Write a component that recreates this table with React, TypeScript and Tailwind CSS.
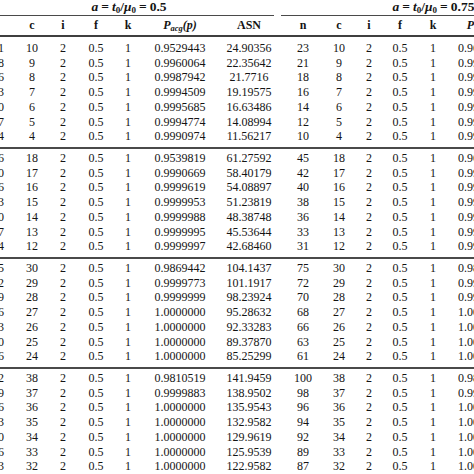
import React from "react";

type Row = [string, string, string, string, string, string, string];

const blocks: Row[][] = [
  [
    ["31", "10", "0.9529443", "24.90356", "23", "0.9636542", "17.47013"],
    ["28", "9", "0.9960064", "22.35642", "21", "0.9958412", "15.71244"],
    ["26", "8", "0.9987942", "21.7716", "18", "0.9987310", "13.95218"],
    ["23", "7", "0.9994509", "19.19575", "16", "0.9994215", "12.20365"],
    ["20", "6", "0.9995685", "16.63486", "14", "0.9995503", "10.44137"],
    ["17", "5", "0.9994774", "14.08994", "12", "0.9994620", "8.67290"],
    ["14", "4", "0.9990974", "11.56217", "10", "0.9990858", "6.91452"],
  ],
  [
    ["56", "18", "0.9539819", "61.27592", "45", "0.9602317", "43.10356"],
    ["50", "17", "0.9990669", "58.40179", "42", "0.9981604", "41.08213"],
    ["46", "16", "0.9999619", "54.08897", "40", "0.9999017", "38.06539"],
    ["43", "15", "0.9999953", "51.23819", "38", "0.9999902", "36.04411"],
    ["40", "14", "0.9999988", "48.38748", "36", "0.9999974", "34.02195"],
    ["37", "13", "0.9999995", "45.53644", "33", "0.9999990", "31.00820"],
    ["34", "12", "0.9999997", "42.68460", "31", "0.9999995", "28.99043"],
  ],
  [
    ["95", "30", "0.9869442", "104.1437", "75", "0.9874310", "73.50914"],
    ["92", "29", "0.9999773", "101.1917", "72", "0.9999581", "71.49672"],
    ["89", "28", "0.9999999", "98.23924", "70", "0.9999997", "69.48236"],
    ["86", "27", "1.0000000", "95.28632", "68", "1.0000000", "67.46711"],
    ["83", "26", "1.0000000", "92.33283", "66", "1.0000000", "65.45108"],
    ["80", "25", "1.0000000", "89.37870", "63", "1.0000000", "62.43502"],
    ["76", "24", "1.0000000", "85.25299", "61", "1.0000000", "60.41793"],
  ],
  [
    ["122", "38", "0.9810519", "141.9459", "100", "0.9836215", "99.59120"],
    ["119", "37", "0.9999883", "138.9502", "98", "0.9999710", "97.57864"],
    ["116", "36", "1.0000000", "135.9543", "96", "1.0000000", "95.56530"],
    ["113", "35", "1.0000000", "132.9582", "94", "1.0000000", "93.55147"],
    ["110", "34", "1.0000000", "129.9619", "92", "1.0000000", "91.53718"],
    ["106", "33", "1.0000000", "125.9539", "89", "1.0000000", "88.52204"],
    ["103", "32", "1.0000000", "122.9582", "87", "1.0000000", "86.50632"],
  ],
];

const cell = "shrink-0 text-center whitespace-nowrap";

function Title({ value }: { value: string }) {
  return (
    <span className="font-bold whitespace-nowrap text-[13.5px]">
      <i>a</i>
      <span className="mx-[3px]">=</span>
      <i>t</i>
      <sub className="text-[9px] not-italic">0</sub>/<i>μ</i>
      <sub className="text-[9px] not-italic">0</sub>
      <span className="mx-[3px]">=</span>
      {value}
    </span>
  );
}

function PHead() {
  return (
    <span className="font-bold italic whitespace-nowrap">
      P<sub className="text-[8.5px]">acg</sub>(p)
    </span>
  );
}

function Rule({ thick }: { thick?: boolean }) {
  return <div className={thick ? "h-[2px] bg-[#3f3f3f]" : "h-[1.3px] bg-[#4a4a4a]"} />;
}

function DataRow({ r }: { r: Row }) {
  return (
    <div className="flex h-[14.75px] leading-[14.75px]">
      <div className="shrink-0 w-[34px] pr-[10px] text-right whitespace-nowrap">{r[0]}</div>
      <div className={`${cell} w-[36px]`}>{r[1]}</div>
      <div className={`${cell} w-[26px]`}>2</div>
      <div className={`${cell} w-[40px]`}>0.5</div>
      <div className={`${cell} w-[24px]`}>1</div>
      <div className={`${cell} w-[80px]`}>{r[2]}</div>
      <div className={`${cell} w-[58px]`}>{r[3]}</div>
      <div className={`${cell} w-[50px]`}>{r[4]}</div>
      <div className={`${cell} w-[22px]`}>{r[1]}</div>
      <div className={`${cell} w-[38px]`}>2</div>
      <div className={`${cell} w-[24px]`}>0.5</div>
      <div className={`${cell} w-[42px]`}>1</div>
      <div className={`${cell} w-[59px]`}>{r[5]}</div>
      <div className={`${cell} w-[76px]`}>{r[6]}</div>
    </div>
  );
}

export default function App() {
  return (
    <div className="w-[474px] h-[474px] overflow-hidden bg-white">
      <div className="-ml-[20px] -mt-[2px] w-[609px] font-['Liberation_Serif',serif] text-[12px] text-[#141414]">
        <div className="flex h-[17px] leading-[17px]">
          <div className="w-[298px] shrink-0 text-center">
            <Title value="0.5" />
          </div>
          <div className="w-[311px] shrink-0 text-center">
            <Title value="0.75" />
          </div>
        </div>
        <div className="flex">
          <div className="w-[294px] shrink-0">
            <Rule />
          </div>
          <div className="w-[308px] shrink-0 ml-[7px]">
            <Rule />
          </div>
        </div>
        <div className="flex h-[19px] leading-[19px] font-bold">
          <div className="shrink-0 w-[34px] pr-[24px] text-right">n</div>
          <div className={`${cell} w-[36px]`}>c</div>
          <div className={`${cell} w-[26px]`}>i</div>
          <div className={`${cell} w-[40px]`}>f</div>
          <div className={`${cell} w-[24px]`}>k</div>
          <div className={`${cell} w-[80px]`}>
            <PHead />
          </div>
          <div className={`${cell} w-[58px]`}>ASN</div>
          <div className={`${cell} w-[50px]`}>n</div>
          <div className={`${cell} w-[22px]`}>c</div>
          <div className={`${cell} w-[38px]`}>i</div>
          <div className={`${cell} w-[24px]`}>f</div>
          <div className={`${cell} w-[42px]`}>k</div>
          <div className={`${cell} w-[59px]`}>
            <PHead />
          </div>
          <div className={`${cell} w-[76px]`}>ASN</div>
        </div>
        <Rule thick />
        <div className="pt-[3.5px]">
          {blocks.map((b, bi) => (
            <div key={bi}>
              {bi > 0 && (
                <div className="pt-[3.4px] pb-[2.05px]">
                  <Rule />
                </div>
              )}
              {b.map((r, ri) => (
                <DataRow key={ri} r={r} />
              ))}
            </div>
          ))}
        </div>
      </div>
    </div>
  );
}
